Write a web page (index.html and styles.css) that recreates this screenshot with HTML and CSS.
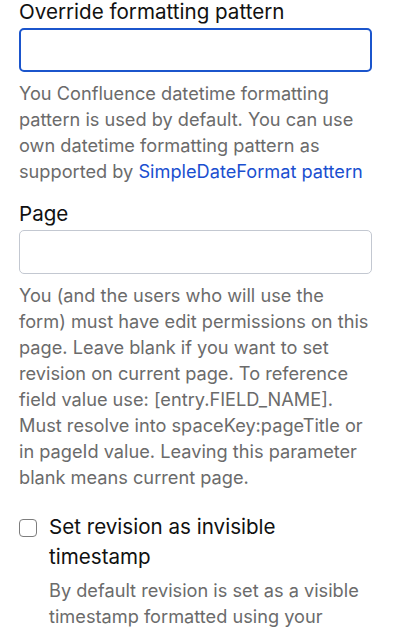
FILE: index.html
```html
<!DOCTYPE html>
<html lang="en">
<head>
<meta charset="utf-8">
<title>Form settings</title>
<link rel="stylesheet" href="styles.css">
</head>
<body>
<div class="form">
  <div class="field">
    <label class="label" for="pattern">Override formatting pattern</label>
    <input class="input input-focus" id="pattern" type="text">
    <p class="help">You Confluence datetime formatting pattern is used by default. You can use own datetime formatting pattern as supported by <a class="link" href="#">SimpleDateFormat pattern</a></p>
  </div>
  <div class="field">
    <label class="label" for="page">Page</label>
    <input class="input" id="page" type="text">
    <p class="help">You (and the users who will use the form) must have edit permissions on this page. Leave blank if you want to set revision on current page. To reference field value use: [entry.FIELD_NAME]. Must resolve into spaceKey:pageTitle or in pageId value. Leaving this parameter blank means current page.</p>
  </div>
  <div class="check-field">
    <span class="checkbox"></span>
    <div class="check-body">
      <span class="check-label">Set revision as invisible timestamp</span>
      <p class="help">By default revision is set as a visible timestamp formatted using your</p>
    </div>
  </div>
</div>
</body>
</html>
```
FILE: styles.css
```css
html, body {
  margin: 0;
  padding: 0;
  background: #ffffff;
}
body {
  font-family: Inter, "Liberation Sans", sans-serif;
  color: #172b4d;
}
.form {
  width: 353px;
  padding: 0 28px 0 19px;
}
.field {
  display: flex;
  flex-direction: column;
}
.label {
  font-size: 20.6px;
  line-height: 24px;
  color: #111111;
  margin: 0 0 4px;
}
.input {
  box-sizing: border-box;
  width: 353px;
  height: 44px;
  border: 1px solid #c3c8d1;
  border-radius: 5px;
  background: #fff;
  margin: 0;
  padding: 0 10px;
  outline: none;
}
.input-focus {
  border: 2px solid #1b55cc;
}
.help {
  margin: 8px 0 0;
  font-size: 18.2px;
  line-height: 26px;
  color: #6b6b6b;
}
.field + .field {
  margin-top: 18px;
}
.link {
  color: #1a4fd0;
  text-decoration: none;
}
.check-field {
  display: flex;
  gap: 12px;
  margin-top: 22px;
}
.checkbox {
  flex: none;
  box-sizing: border-box;
  width: 18px;
  height: 18px;
  border: 1.5px solid #7d7d7d;
  border-radius: 4px;
  margin-top: 6.5px;
}
.check-body {
  display: flex;
  flex-direction: column;
}
.check-label {
  font-size: 20.6px;
  line-height: 30px;
  color: #111111;
}
.check-body .help {
  margin-top: 5px;
}
```
